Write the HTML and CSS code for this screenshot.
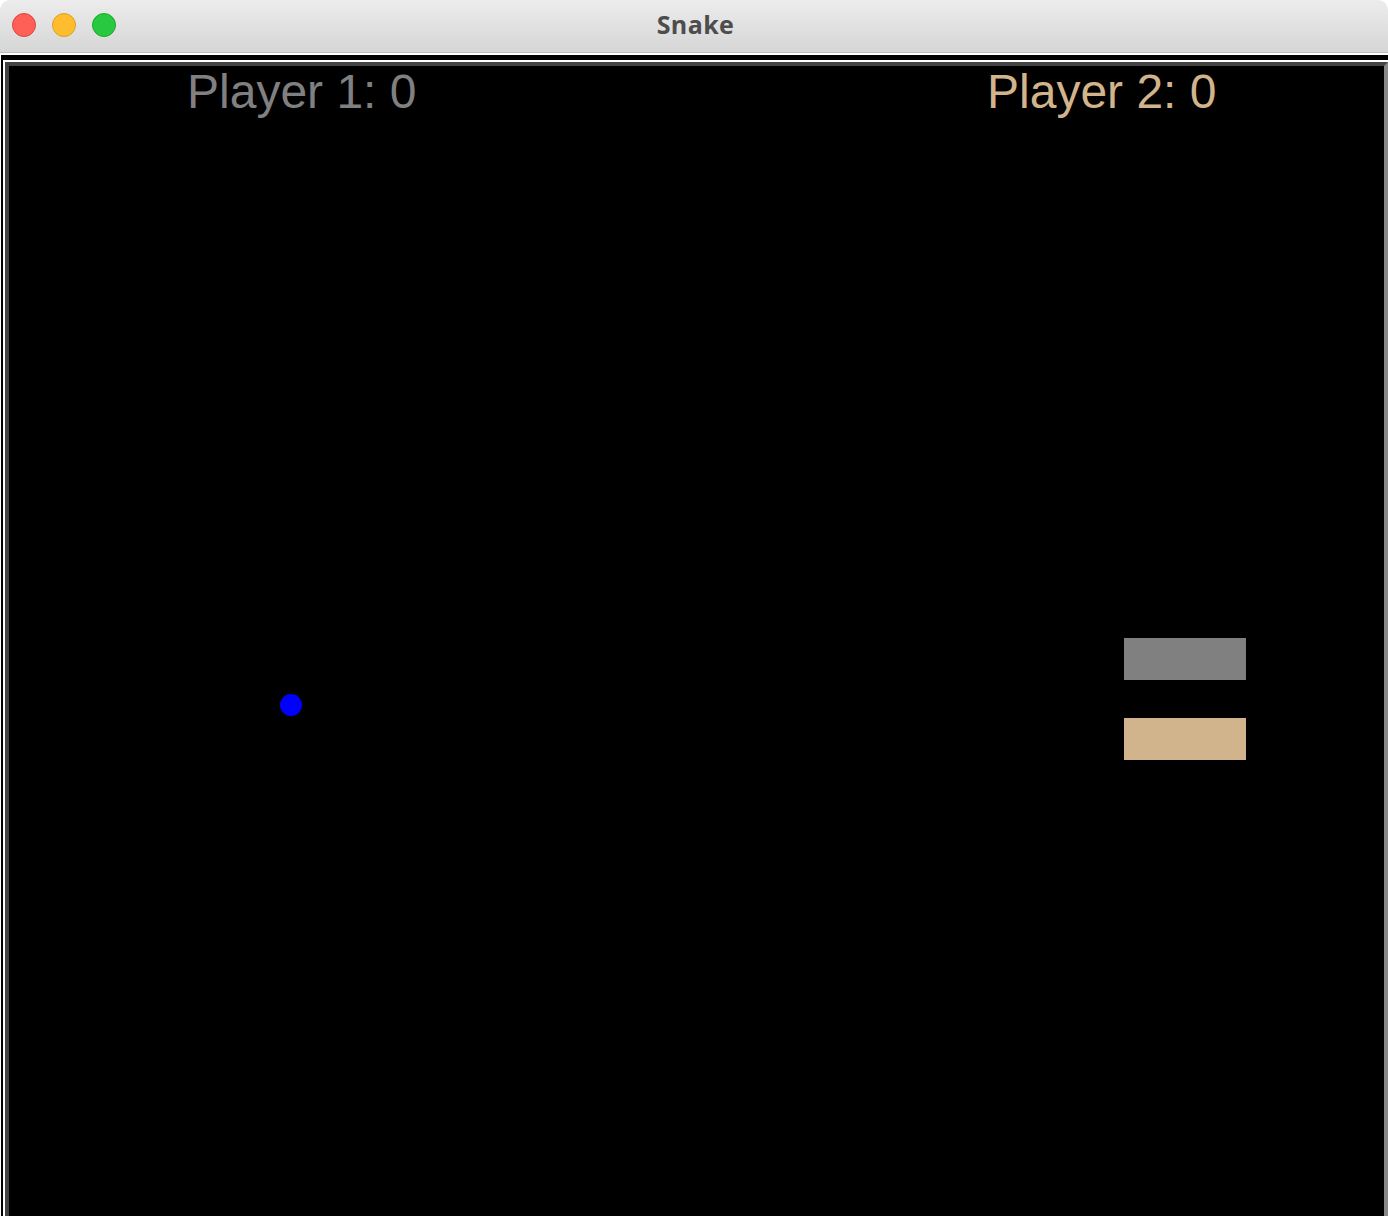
FILE: index.html
```html
<!DOCTYPE html>
<html>
<head>
<meta charset="utf-8">
<title>Snake</title>
<link rel="stylesheet" href="styles.css">
</head>
<body>
<div class="window">
  <div class="titlebar">
    <div class="lights">
      <span class="light red"></span>
      <span class="light yellow"></span>
      <span class="light green"></span>
    </div>
    <div class="title">Snake</div>
  </div>
  <div class="frame">
    <div class="inner">
      <div class="canvas">
        <div class="scores">
          <div class="score p1">Player 1: 0</div>
          <div class="score p2">Player 2: 0</div>
        </div>
        <div class="food"></div>
        <div class="seg seg-grey"></div>
        <div class="seg seg-tan"></div>
      </div>
    </div>
  </div>
</div>
</body>
</html>
```
FILE: styles.css
```css
html, body {
  margin: 0;
  padding: 0;
  background: #ffffff;
  width: 1388px;
  height: 1216px;
  overflow: hidden;
}

.window {
  display: flex;
  flex-direction: column;
  height: 1216px;
}

.titlebar {
  position: relative;
  height: 52px;
  flex: none;
  background: linear-gradient(#ececec, #d6d6d6);
  border-bottom: 1px solid #bcbcbc;
  border-radius: 10px 10px 0 0;
  display: flex;
  align-items: center;
  justify-content: center;
}

.lights {
  position: absolute;
  left: 12px;
  top: 13px;
  display: flex;
  gap: 16px;
}

.light {
  width: 22px;
  height: 22px;
  border-radius: 50%;
  border: 1px solid rgba(0,0,0,0.12);
}
.red { background: #fe5f57; border-color: #e0443e; }
.yellow { background: #febc2e; border-color: #dea123; }
.green { background: #28c840; border-color: #1aab29; }

.title {
  font-family: "Open Sans", "Liberation Sans", sans-serif;
  font-weight: 700;
  font-size: 25px;
  color: #4d4d4d;
  letter-spacing: 0.4px;
  margin-top: -5px;
  margin-left: 3px;
}

.frame {
  flex: 1;
  margin-top: 2px;
  margin-left: 1px;
  border-top: 5px solid #000;
  border-left: 2px solid #000;
  display: flex;
  flex-direction: column;
}

.inner {
  flex: 1;
  border-top: 2px solid #fff;
  border-left: 2px solid #fff;
  display: flex;
  flex-direction: column;
}

.canvas {
  position: relative;
  flex: 1;
  background: #000;
  border-top: 4px solid #444444;
  border-left: 4px solid #444444;
  border-right: 4px solid #888888;
}

.scores {
  display: grid;
  grid-template-columns: 800px auto;
  padding-left: 178px;
  padding-top: 2px;
}

.score {
  font-family: "Liberation Sans", Arial, sans-serif;
  font-size: 48px;
  line-height: 48px;
  white-space: nowrap;
}
.p1 { color: #808080; }
.p2 { color: #d2b48c; }

.food {
  position: absolute;
  left: 271px;
  top: 628px;
  width: 22px;
  height: 22px;
  border-radius: 50%;
  background: #0000ff;
}

.seg {
  position: absolute;
  left: 1115px;
  width: 122px;
  height: 42px;
}
.seg-grey { top: 572px; background: #808080; }
.seg-tan { top: 652px; background: #d2b48c; }
```
